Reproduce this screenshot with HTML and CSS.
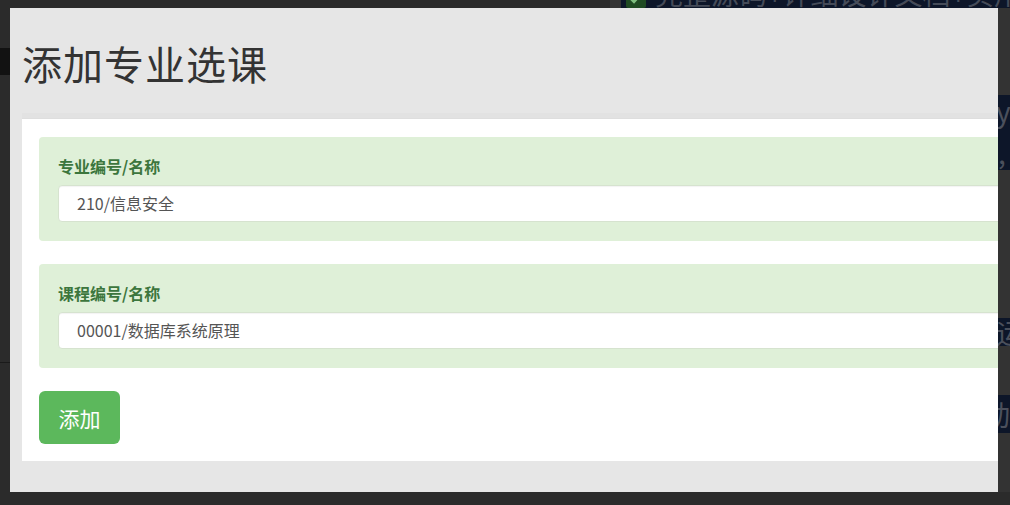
FILE: index.html
```html
<!DOCTYPE html>
<html lang="zh-CN">
<head>
<meta charset="utf-8">
<title>添加专业选课</title>
<link rel="stylesheet" href="styles.css">
</head>
<body>
<div class="desk">
  <div class="bg-left-band"></div>
  <div class="bg-left-line"></div>
  <div class="bg-top-grey"></div>
  <div class="bg-top-strip">
    <span class="bg-check"><svg width="20" height="20" viewBox="0 0 20 20"><rect x="0" y="0" width="20" height="20" rx="2" fill="#1f4a22"/><path d="M4 10 L8 14 L16 5" stroke="#7fbf7f" stroke-width="2.4" fill="none"/></svg></span>
    <span class="bg-top-text">完整源码+详细设计文档+实用可</span>
  </div>
  <div class="bg-right">
    <div class="bg-right-band b1"><span class="frag f1">y</span><span class="frag f2">,</span></div>
    <div class="bg-right-band b2"><span class="frag f3">运</span></div>
    <div class="bg-right-band b3"><span class="frag f4">动</span></div>
  </div>

  <div class="window">
    <h1 class="title">添加专业选课</h1>
    <div class="card">
      <div class="group">
        <label class="group-label">专业编号/名称</label>
        <div class="field">210/信息安全</div>
      </div>
      <div class="group">
        <label class="group-label">课程编号/名称</label>
        <div class="field">00001/数据库系统原理</div>
      </div>
      <button class="btn-add">添加</button>
    </div>
  </div>
</div>
</body>
</html>
```
FILE: styles.css
```css
html, body {
  margin: 0;
  padding: 0;
}
body {
  width: 1010px;
  height: 505px;
  overflow: hidden;
  background: #2b2b2b;
  font-family: "Noto Sans CJK SC", "Noto Sans", sans-serif;
}
.desk {
  position: relative;
  width: 1010px;
  height: 505px;
  padding: 8px 0 0 10px;
  box-sizing: border-box;
}
.bg-left-band {
  position: absolute;
  left: 0;
  top: 48px;
  width: 10px;
  height: 27px;
  background: #121212;
}
.bg-left-line {
  position: absolute;
  left: 0;
  top: 362px;
  width: 10px;
  height: 1px;
  background: #1a1a1a;
}
.bg-top-grey {
  position: absolute;
  left: 610px;
  top: 0;
  width: 11px;
  height: 8px;
  background: #343434;
}
.bg-top-strip {
  position: absolute;
  left: 621px;
  top: 0;
  width: 389px;
  height: 8px;
  background: #0d1629;
  overflow: hidden;
}
.bg-check {
  position: absolute;
  left: 5px;
  top: -12px;
}
.bg-top-text {
  position: absolute;
  left: 34px;
  top: -24px;
  font-size: 28px;
  line-height: 34px;
  color: #454b58;
  white-space: nowrap;
}
.bg-right {
  position: absolute;
  left: 998px;
  top: 8px;
  width: 12px;
  height: 484px;
  background: #333333;
  overflow: hidden;
}
.bg-right-band {
  position: absolute;
  left: 0;
  width: 12px;
  background: #0d1629;
  overflow: hidden;
}
.b1 { top: 87px; height: 75px; }
.b2 { top: 310px; height: 28px; }
.b3 { top: 387px; height: 38px; }
.frag {
  position: absolute;
  color: #4b505c;
  font-size: 28px;
  line-height: 30px;
  white-space: nowrap;
}
.f1 { left: -2px; top: 0px; }
.f2 { left: 0px; top: 42px; }
.f3 { left: -2px; top: -1px; }
.f4 { left: -16px; top: 4px; }

.window {
  position: relative;
  z-index: 1;
  width: 988px;
  height: 484px;
  background: #e6e6e6;
  overflow: hidden;
}
.title {
  margin: 31px 0 0 12px;
  font-size: 40px;
  line-height: 48px;
  font-weight: 400;
  color: #333333;
  letter-spacing: 1px;
}
.card {
  margin: 31px -80px 0 12px;
  padding: 18px 17px 17px 17px;
  background: #ffffff;
  border-top: 1px solid #dedede;
  box-shadow: 0 -5px 0 #e2e2e2;
}
.group {
  background: #dff0d8;
  border-radius: 4px;
  padding: 18px 19px 19px 19px;
  margin-bottom: 23px;
}
.group-label {
  display: block;
  font-size: 16px;
  line-height: 22px;
  font-weight: 700;
  color: #3c763d;
  margin-bottom: 8px;
}
.field {
  height: 37px;
  box-sizing: border-box;
  background: #ffffff;
  border: 1px solid #d6e3cf;
  border-radius: 4px;
  padding: 0 18px;
  font-size: 16px;
  line-height: 35px;
  color: #555555;
  box-shadow: inset 0 1px 1px rgba(0, 0, 0, 0.05);
}
.btn-add {
  display: block;
  width: 81px;
  height: 53px;
  border: none;
  border-radius: 6px;
  background: #5cb85c;
  color: #ffffff;
  font-family: "Noto Sans CJK SC", "Noto Sans", sans-serif;
  font-size: 21px;
  padding: 0;
  margin: 0;
}
```
